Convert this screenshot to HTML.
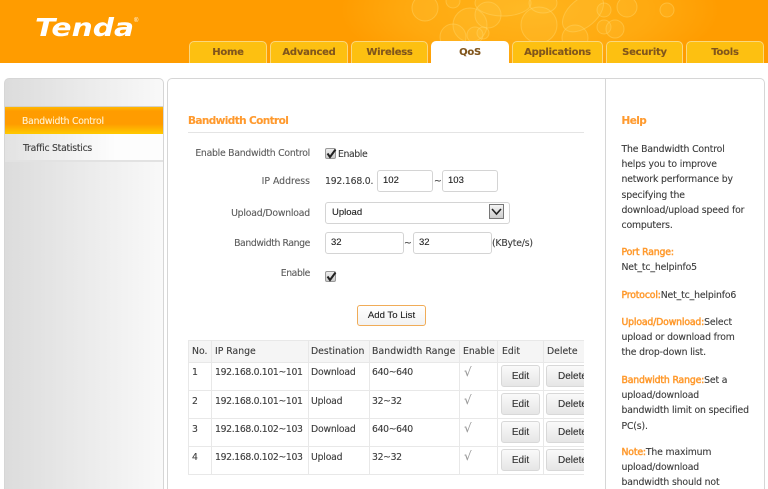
<!DOCTYPE html>
<html><head><meta charset="utf-8"><title>Tenda</title>
<style>
html,body{margin:0;padding:0;background:#fff;width:768px;height:489px;overflow:hidden}
#w{position:absolute;left:0;top:0;width:768px;height:489px;overflow:hidden;font-family:"DejaVu Sans",sans-serif;font-size:9.3px;color:#3c3c3c;filter:blur(.35px);background:#fff;-webkit-text-stroke:.12px currentColor}
.a{position:absolute;white-space:nowrap}
#hd{left:0;top:0;width:768px;height:63px;background:radial-gradient(ellipse 190px 70px at 530px 10px,#ffb41c 0,#ffa90f 65%,#ff9c00 100%);overflow:hidden}
.tab{position:absolute;top:41px;height:22px;box-sizing:border-box;background:#fdc011;border:1px solid #fbd77c;border-bottom:0;border-radius:5px 5px 0 0;text-align:center;font:bold 10px/21px "DejaVu Sans",sans-serif;letter-spacing:-.25px;color:#80551c}
.tab.on{background:#fff;border-color:#fff}
#left{left:4px;top:78px;width:160px;height:430px;box-sizing:border-box;border:1px solid #d6d6d6;border-radius:5px;background:linear-gradient(90deg,#dcdcdc,#f9f9f9)}
#active{left:5px;top:107px;width:158px;height:27px;background:linear-gradient(#ffb800 0,#ff9c00 4px,#ff9c00 17px,#ffc600 26px);box-shadow:0 -1px 0 #d4d0c8}
#t2{left:5px;top:134px;width:158px;height:28px;border-bottom:2px solid #e2e2e2;box-sizing:border-box;background:linear-gradient(90deg,#e2e2e2,#fdfdfd 70%)}
#main{left:167px;top:78px;width:598px;height:430px;box-sizing:border-box;border:1px solid #d6d6d6;border-radius:5px;background:#fff}
#div{left:605px;top:78px;width:1px;height:411px;background:#d6d6d6}
.h{font-weight:bold;font-size:10.5px;letter-spacing:-.6px;color:#ff9a2e}
.lb{color:#5c5c5c;text-align:right;width:122px;left:188px}
.inp{position:absolute;box-sizing:border-box;height:22px;border:1px solid #d4d4d4;border-radius:3px;background:#fff;font:9.5px/20px "Liberation Sans",sans-serif;color:#222;padding-left:5px}
.cb{position:absolute;width:11px;height:11px;box-sizing:border-box;border:1px solid #999;border-radius:2px;background:linear-gradient(#eee,#ccc)}
.cb svg{position:absolute;left:-1px;top:-2px}
#tb{left:188px;top:340px;width:396px;height:135px;overflow:hidden}
.ln{position:absolute;background:#e8e8e8}
.c{position:absolute;color:#3c3c3c}
.n{letter-spacing:-.35px}
.v{color:#999;font-size:12px;line-height:12px}
.b{position:absolute;box-sizing:border-box;height:22px;border:1px solid #d8d8d8;border-radius:3px;background:linear-gradient(#fafafa,#e6e6e6);font:10px/21px "Liberation Sans",sans-serif;color:#333;text-align:center}
.d{text-align:left;padding-left:11px;width:50px;left:358px}
.hp{left:621.5px;line-height:15.2px;color:#3c3c3c;letter-spacing:-.15px}
.o{color:#ff9a2e;-webkit-text-stroke:.5px #ff9a2e}
</style></head><body><div id="w">
<div id="hd" class="a">
<svg width="768" height="63" style="position:absolute;left:0;top:0" fill="#ffd65a" stroke="#ffd970" stroke-width="1">
<g fill-opacity=".16" stroke-opacity=".42">
<circle cx="425" cy="8" r="13"/><circle cx="453" cy="1" r="7"/><circle cx="470" cy="25" r="17"/><circle cx="488" cy="15" r="13"/>
<ellipse cx="503" cy="3" rx="28" ry="13"/><ellipse cx="543" cy="3" rx="14" ry="10"/><circle cx="539" cy="25" r="18"/>
<ellipse cx="583" cy="13" rx="24" ry="14" transform="rotate(-40 583 13)"/>
<circle cx="604" cy="10" r="7"/><circle cx="627" cy="7" r="10"/><circle cx="667" cy="10" r="7"/>
<circle cx="604" cy="27" r="7"/><circle cx="615" cy="29" r="9"/><circle cx="453" cy="37" r="13"/><circle cx="475" cy="35" r="8"/><circle cx="483" cy="33" r="6"/><circle cx="575" cy="38" r="13"/>
</g></svg>
<svg width="768" height="63" style="position:absolute;left:0;top:0">
<text x="35" y="36" fill="#fff" font-family="DejaVu Sans" font-weight="bold" font-style="italic" font-size="25" textLength="99" lengthAdjust="spacingAndGlyphs">Tenda</text>
<text x="134" y="22" fill="#fff" font-family="Liberation Sans" font-size="6">®</text>
</svg>
<div class="tab" style="left:189px;width:78px">Home</div>
<div class="tab" style="left:270px;width:78px">Advanced</div>
<div class="tab" style="left:351px;width:77px">Wireless</div>
<div class="tab on" style="left:431px;width:78px">QoS</div>
<div class="tab" style="left:512px;width:91px">Applications</div>
<div class="tab" style="left:606px;width:77px">Security</div>
<div class="tab" style="left:686px;width:78px">Tools</div>
</div>

<div id="left" class="a"></div>
<div id="active" class="a"></div>
<div id="t2" class="a"></div>
<div class="a" style="left:22px;top:116px;color:#fff2d0;letter-spacing:-.25px">Bandwidth Control</div>
<div class="a" style="left:23px;top:143px;color:#3c3c3c;letter-spacing:-.25px">Traffic Statistics</div>

<div id="main" class="a"></div>
<div id="div" class="a"></div>
<div class="a h" style="left:188px;top:115px">Bandwidth Control</div>
<div class="a" style="left:188px;top:132px;width:396px;height:1px;background:#e4e4e4"></div>

<div class="a lb" style="top:148px;letter-spacing:-.25px">Enable Bandwidth Control</div>
<div class="cb" style="left:325px;top:148px"><svg width="13" height="13"><path d="M2.5 6.5L5 10L10.5 2.5" fill="none" stroke="#222" stroke-width="2"/></svg></div>
<div class="a" style="left:338px;top:149px;letter-spacing:-.4px">Enable</div>

<div class="a lb" style="top:176px">IP Address</div>
<div class="a" style="left:325px;top:176px;letter-spacing:-.2px">192.168.0.</div>
<div class="inp" style="left:377px;top:170px;width:56px">102</div>
<div class="a" style="left:434px;top:176px">~</div>
<div class="inp" style="left:442px;top:170px;width:56px">103</div>

<div class="a lb" style="top:208px;letter-spacing:-.2px">Upload/Download</div>
<div class="inp" style="left:325px;top:202px;width:185px;padding-left:6px">Upload</div>
<div class="a" style="left:489px;top:204px;width:15px;height:15px;box-sizing:border-box;border:1px solid #777;background:linear-gradient(#f4f4f4,#ccc)"><svg width="13" height="13" style="position:absolute;left:0;top:0"><path d="M2 4L6.5 9L11 4" fill="none" stroke="#222" stroke-width="1.6"/></svg></div>

<div class="a lb" style="top:238px;letter-spacing:-.4px">Bandwidth Range</div>
<div class="inp" style="left:325px;top:232px;width:79px">32</div>
<div class="a" style="left:404px;top:238px">~</div>
<div class="inp" style="left:413px;top:232px;width:79px">32</div>
<div class="a" style="left:492px;top:238px;letter-spacing:-.2px">(KByte/s)</div>

<div class="a lb" style="top:268px;letter-spacing:-.4px">Enable</div>
<div class="cb" style="left:325px;top:271px"><svg width="13" height="13"><path d="M2.5 6.5L5 10L10.5 2.5" fill="none" stroke="#222" stroke-width="2"/></svg></div>

<div class="a" style="left:357px;top:305px;width:69px;height:21px;box-sizing:border-box;border:1px solid #f0ac58;border-radius:3px;background:linear-gradient(#fff,#f2f2f2);font:9.6px/19px 'Liberation Sans',sans-serif;color:#222;text-align:center">Add To List</div>

<div id="tb" class="a">
<div class="ln" style="left:0;top:0;width:396px;height:22px;background:#f5f5f5"></div>
<div class="ln" style="left:0;top:0;width:396px;height:1px"></div>
<div class="ln" style="left:0;top:22px;width:396px;height:1px"></div>
<div class="ln" style="left:0;top:50px;width:396px;height:1px"></div>
<div class="ln" style="left:0;top:78px;width:396px;height:1px"></div>
<div class="ln" style="left:0;top:106px;width:396px;height:1px"></div>
<div class="ln" style="left:0;top:134px;width:396px;height:1px"></div>
<div class="ln" style="left:0;top:0;width:1px;height:135px"></div>
<div class="ln" style="left:23px;top:0;width:1px;height:135px"></div>
<div class="ln" style="left:120px;top:0;width:1px;height:135px"></div>
<div class="ln" style="left:181px;top:0;width:1px;height:135px"></div>
<div class="ln" style="left:271px;top:0;width:1px;height:135px"></div>
<div class="ln" style="left:309px;top:0;width:1px;height:135px"></div>
<div class="ln" style="left:355px;top:0;width:1px;height:135px"></div>

<div class="c" style="left:4px;top:6px">No.</div><div class="c" style="left:27px;top:6px">IP Range</div><div class="c" style="left:123px;top:6px">Destination</div><div class="c" style="left:184px;top:6px;letter-spacing:.1px">Bandwidth Range</div><div class="c" style="left:275px;top:6px">Enable</div><div class="c" style="left:314px;top:6px">Edit</div><div class="c" style="left:359px;top:6px">Delete</div>

<div class="c" style="left:4px;top:27px">1</div><div class="c n" style="left:27px;top:27px">192.168.0.101~101</div><div class="c" style="left:123px;top:27px;letter-spacing:-.2px">Download</div><div class="c n" style="left:184px;top:27px">640~640</div><div class="c v" style="left:276px;top:26px">√</div>
<div class="b" style="left:313px;top:25px;width:39px">Edit</div><div class="b d" style="top:25px">Delete</div>

<div class="c" style="left:4px;top:56px">2</div><div class="c n" style="left:27px;top:56px">192.168.0.101~101</div><div class="c" style="left:123px;top:56px;letter-spacing:-.2px">Upload</div><div class="c n" style="left:184px;top:56px">32~32</div><div class="c v" style="left:276px;top:54px">√</div>
<div class="b" style="left:313px;top:53px;width:39px">Edit</div><div class="b d" style="top:53px">Delete</div>

<div class="c" style="left:4px;top:84px">3</div><div class="c n" style="left:27px;top:84px">192.168.0.102~103</div><div class="c" style="left:123px;top:84px;letter-spacing:-.2px">Download</div><div class="c n" style="left:184px;top:84px">640~640</div><div class="c v" style="left:276px;top:82px">√</div>
<div class="b" style="left:313px;top:81px;width:39px">Edit</div><div class="b d" style="top:81px">Delete</div>

<div class="c" style="left:4px;top:112px">4</div><div class="c n" style="left:27px;top:112px">192.168.0.102~103</div><div class="c" style="left:123px;top:112px;letter-spacing:-.2px">Upload</div><div class="c n" style="left:184px;top:112px">32~32</div><div class="c v" style="left:276px;top:110px">√</div>
<div class="b" style="left:313px;top:109px;width:39px">Edit</div><div class="b d" style="top:109px">Delete</div>
</div>

<div class="a h" style="left:621.5px;top:115px">Help</div>
<div class="a hp" style="top:142px">The Bandwidth Control<br>helps you to improve<br>network performance by<br>specifying the<br>download/upload speed for<br>computers.</div>
<div class="a hp" style="top:245px"><span class="o">Port Range:</span><br>Net_tc_helpinfo5</div>
<div class="a hp" style="top:288px"><span class="o">Protocol:</span>Net_tc_helpinfo6</div>
<div class="a hp" style="top:315px"><span class="o">Upload/Download:</span>Select<br>upload or download from<br>the drop-down list.</div>
<div class="a hp" style="top:373px"><span class="o">Bandwidth Range:</span>Set a<br>upload/download<br>bandwidth limit on specified<br>PC(s).</div>
<div class="a hp" style="top:445px"><span class="o">Note:</span>The maximum<br>upload/download<br>bandwidth should not</div>
</div></body></html>
